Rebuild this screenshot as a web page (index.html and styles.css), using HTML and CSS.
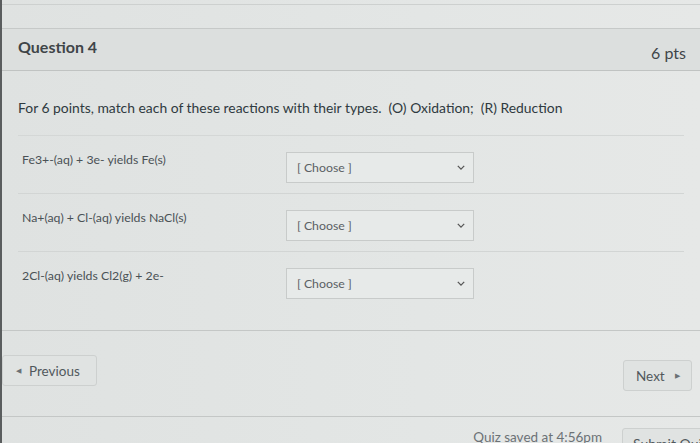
FILE: index.html
```html
<!DOCTYPE html>
<html>
<head>
<meta charset="utf-8">
<link rel="stylesheet" href="styles.css">
</head>
<body>
<div class="page">
  <div class="topstrip"></div>
  <section class="question">
    <header class="q-header">
      <h2 class="q-title">Question 4</h2>
      <span class="q-pts">6 pts</span>
    </header>
    <div class="q-body">
      <p class="q-text">For 6 points, match each of these reactions with their types.&nbsp; (O) Oxidation;&nbsp; (R) Reduction</p>
      <div class="rows">
        <div class="row">
          <span class="label">Fe3+-(aq) + 3e- yields Fe(s)</span>
          <div class="select"><span>[ Choose ]</span><svg class="chev" viewBox="0 0 10 6" width="8" height="5"><path d="M1 1 L5 5 L9 1" fill="none" stroke="#555" stroke-width="1.6"/></svg></div>
        </div>
        <div class="row">
          <span class="label">Na+(aq) + Cl-(aq) yields NaCl(s)</span>
          <div class="select"><span>[ Choose ]</span><svg class="chev" viewBox="0 0 10 6" width="8" height="5"><path d="M1 1 L5 5 L9 1" fill="none" stroke="#555" stroke-width="1.6"/></svg></div>
        </div>
        <div class="row last">
          <span class="label">2Cl-(aq) yields Cl2(g) + 2e-</span>
          <div class="select"><span>[ Choose ]</span><svg class="chev" viewBox="0 0 10 6" width="8" height="5"><path d="M1 1 L5 5 L9 1" fill="none" stroke="#555" stroke-width="1.6"/></svg></div>
        </div>
      </div>
    </div>
  </section>
  <nav class="nav">
    <button class="btn prev"><span class="tri">&#9664;</span>Previous</button>
    <button class="btn next">Next<span class="tri">&#9654;</span></button>
  </nav>
  <footer class="footer">
    <span class="saved">Quiz saved at 4:56pm</span>
    <button class="btn submit">Submit Quiz</button>
  </footer>
</div>
</body>
</html>
```
FILE: styles.css
```css
html, body {
  margin: 0;
  padding: 0;
  height: 100%;
  overflow: hidden;
}
body {
  background: #e1e4e3;
  font-family: Lato, "Open Sans", sans-serif;
  color: #3b4246;
}
.page {
  height: 443px;
  border-left: 2px solid #5a5d5e;
  background: linear-gradient(90deg, #dfe2e1 0%, #e3e6e5 60%, #e6e8e7 100%);
  overflow: hidden;
}
.topstrip {
  margin-top: 4px;
  border-top: 1px solid #cdd0cf;
  height: 23px;
}
.question {
  border-top: 1px solid #c6c9c8;
  border-bottom: 1px solid #c4c7c6;
}
.q-header {
  height: 41px;
  display: flex;
  justify-content: space-between;
  align-items: flex-start;
  padding: 0 14px 0 16px;
  background: #dcdfde;
  border-bottom: 1px solid #c0c3c2;
}
.q-title {
  margin: 8px 0 0;
  font-size: 16px;
  font-weight: 700;
  color: #3f4548;
}
.q-pts {
  margin-top: 14px;
  font-size: 16px;
  color: #3f4548;
}
.q-body {
  padding: 0 16px 0 16px;
}
.q-text {
  margin: 28px 0 0;
  font-size: 13.9px;
  color: #2f3a40;
  padding-bottom: 19px;
  border-bottom: 1px solid #d4d7d6;
}
.rows {
  padding-bottom: 21px;
}
.row {
  display: flex;
  align-items: flex-start;
  height: 57px;
  border-bottom: 1px solid #d2d5d4;
  padding-left: 4px;
}
.row.last {
  border-bottom: none;
}
.label {
  width: 264px;
  margin-top: 16px;
  font-size: 12.3px;
  color: #4a5155;
}
.select {
  margin-top: 16px;
  width: 188px;
  height: 31px;
  border: 1px solid #c8cbca;
  background: #e7eae9;
  display: flex;
  align-items: center;
  justify-content: space-between;
  padding: 0 8px 0 10px;
  box-sizing: border-box;
  font-size: 12.3px;
  color: #5a6064;
}
.chev {
  display: block;
}
.nav {
  display: flex;
  justify-content: space-between;
  align-items: flex-start;
  height: 85px;
  border-bottom: 1px solid #c4c7c6;
  padding: 0 8px 0 0;
}
.btn {
  font-family: Lato, "Open Sans", sans-serif;
  font-size: 13.5px;
  color: #51585c;
  background: #e0e3e2;
  border: 1px solid #cdd0cf;
  border-radius: 3px;
  display: flex;
  align-items: center;
  padding: 0;
}
.tri {
  font-size: 7px;
  color: #6b7175;
}
.prev {
  margin-top: 24px;
  width: 95px;
  height: 31px;
  padding-left: 13px;
  gap: 8px;
}
.next {
  margin-top: 29px;
  width: 69px;
  height: 31px;
  padding-left: 12px;
  gap: 10px;
}
.footer {
  display: flex;
  justify-content: flex-end;
  align-items: flex-start;
  gap: 20px;
  padding-top: 11px;
}
.saved {
  margin-top: 1px;
  font-size: 13.5px;
  color: #6c7276;
}
.submit {
  width: 90px;
  height: 31px;
  margin-right: -12px;
  padding-left: 10px;
  font-size: 14px;
}
```
